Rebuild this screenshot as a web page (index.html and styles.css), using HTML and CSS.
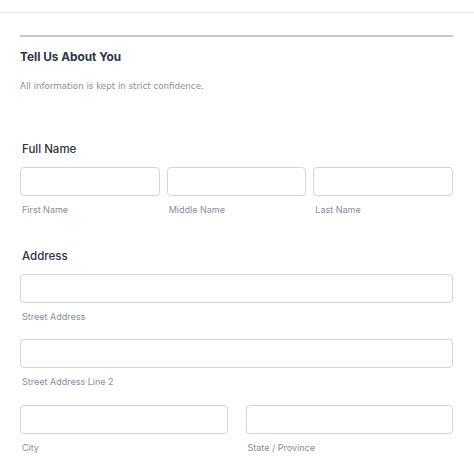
FILE: index.html
```html
<!DOCTYPE html>
<html lang="en">
<head>
  <meta charset="UTF-8">
  <title>Tell Us About You</title>
  <link rel="stylesheet" href="styles.css">
</head>
<body>
  <div class="topbar"></div>

  <form class="form">
    <div class="form-header">
      <h2>Tell Us About You</h2>
      <p class="form-subheader">All information is kept in strict confidence.</p>
    </div>

    <div class="field field-name">
      <label class="field-label">Full Name</label>
      <div class="row row-3">
        <div class="sub">
          <input type="text" id="firstName">
          <label for="firstName">First Name</label>
        </div>
        <div class="sub">
          <input type="text" id="middleName">
          <label for="middleName">Middle Name</label>
        </div>
        <div class="sub">
          <input type="text" id="lastName">
          <label for="lastName">Last Name</label>
        </div>
      </div>
    </div>

    <div class="field field-address">
      <label class="field-label">Address</label>
      <div class="sub">
        <input type="text" id="street1">
        <label for="street1">Street Address</label>
      </div>
      <div class="sub sub-line2">
        <input type="text" id="street2">
        <label for="street2">Street Address Line 2</label>
      </div>
      <div class="row row-2">
        <div class="sub">
          <input type="text" id="city">
          <label for="city">City</label>
        </div>
        <div class="sub">
          <input type="text" id="state">
          <label for="state">State / Province</label>
        </div>
      </div>
    </div>
  </form>
</body>
</html>
```

FILE: styles.css
```css
:root {
  --text-color: #2c3345;
  --muted-color: #8a8e9c;
  --border-color: #d5d6da;
  --divider-color: #c6c7cb;
  --bg-color: #ffffff;
}

body {
  margin: 0;
  background: var(--bg-color);
  font-family: Inter, 'Noto Sans', sans-serif;
  color: var(--text-color);
}

.topbar {
  height: 12px;
  border-bottom: 1px solid #e7e7e9;
}

.form {
  padding: 0 21px 0 20px;
}

.form-header {
  margin-top: 22px;
  border-top: 2px solid var(--divider-color);
}

.form-header h2 {
  margin: 12px 0 0 0;
  font-size: 11.8px;
  line-height: 16px;
  font-weight: 700;
}

.form-subheader {
  margin: 16px 0 0 0;
  font-family: 'DejaVu Sans', Verdana, sans-serif;
  font-size: 8.7px;
  line-height: 10px;
  color: var(--muted-color);
}

.field {
  margin-top: 51px;
}

.field-address {
  margin-top: 33px;
}

.field-label {
  display: block;
  margin: 0 0 10px 2px;
  font-size: 11.5px;
  line-height: 15px;
  font-weight: 500;
}

.row {
  display: flex;
}

.row-3 {
  gap: 7px;
}

.row-2 {
  gap: 18px;
  margin-top: 17px;
}

.sub {
  flex: 1;
  min-width: 0;
}

.sub-line2 {
  margin-top: 16px;
}

.sub input {
  display: block;
  width: 100%;
  height: 29px;
  box-sizing: border-box;
  margin: 0;
  border: 1px solid var(--border-color);
  border-radius: 4px;
  background: #fff;
  box-shadow: 0 0 1px rgba(0, 0, 0, 0.05);
}

.sub label {
  display: block;
  margin: 8px 0 0 2px;
  font-size: 9px;
  line-height: 12px;
  color: var(--muted-color);
}
```
